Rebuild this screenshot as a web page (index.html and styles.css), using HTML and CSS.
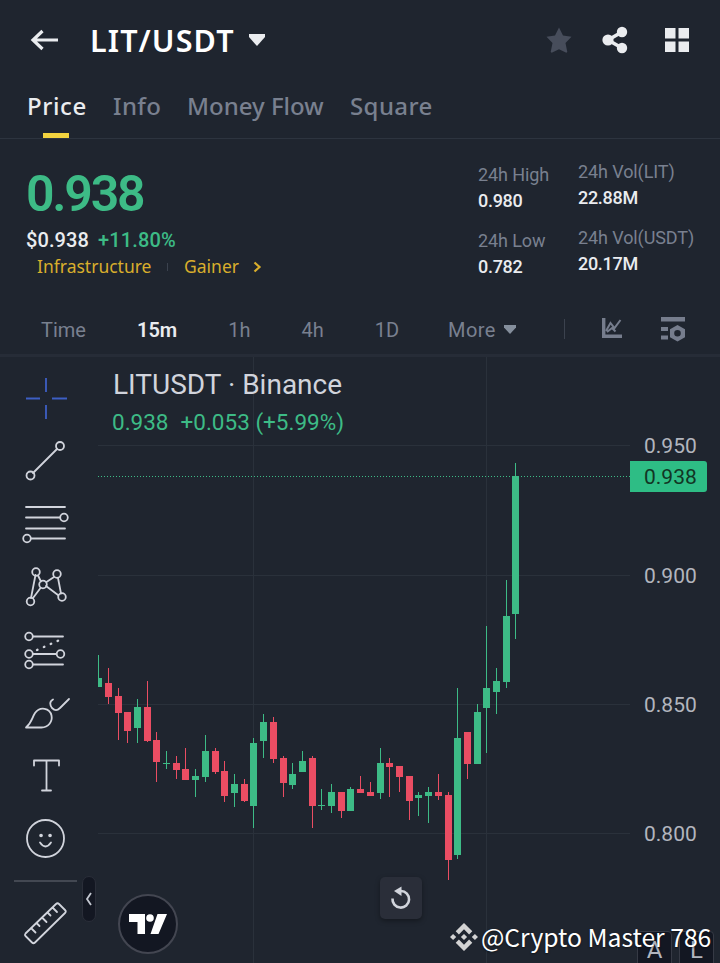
FILE: index.html
```html
<!DOCTYPE html>
<html lang="en">
<head>
    <meta charset="UTF-8">
    <meta name="viewport" content="width=device-width, initial-scale=1.0">
    <title>LIT/USDT</title>
    <link rel="stylesheet" href="styles.css">
</head>
<body>

    <div class="screen">
        <!-- Header -->
        <header class="header">
            <svg class="back" width="28" height="22" viewBox="0 0 28 22"><path d="M12.500 2 3 11l9.500 9M3.500 11H28" fill="none" stroke="#eaecef" stroke-width="3.200"/></svg>
            <h1 class="pair">LIT/USDT</h1>
            <svg class="caret" width="18" height="14" viewBox="0 0 18 14"><path d="M1 1h16v3L9 13 1 4z" fill="#eaecef"/></svg>
            <div class="header-icons">
                <svg width="28" height="28" viewBox="0 0 28 28"><path d="M14 1.500 18 9.500l8.500 1.200-6 6.200 1.800 9.100-1 .700L14 23.200l-7.300 3.500-1-.700 1.800-9.100-6-6.200L10 9.500z" fill="#474d5b"/></svg>
                <svg width="28" height="28" viewBox="0 0 28 28"><path d="M21 6 7 14l14 8" fill="none" stroke="#eaecef" stroke-width="3.600"/><circle cx="21" cy="6" r="5.200" fill="#eaecef"/><circle cx="7" cy="14" r="5.600" fill="#eaecef"/><circle cx="21" cy="22" r="5.200" fill="#eaecef"/></svg>
                <svg class="grid-icon" width="26" height="26" viewBox="0 0 26 26"><path d="M1 1h10.500v10.500H1zM14.500 1H25v10.500H14.500zM1 14.500h10.500V25H1zM14.500 14.500H25V25H14.500z" fill="#eaecef"/></svg>
            </div>
        </header>

        <!-- Tabs -->
        <nav class="tabs">
            <a class="tab tab-price active">Price</a>
            <a class="tab tab-info">Info</a>
            <a class="tab tab-flow">Money Flow</a>
            <a class="tab tab-square">Square</a>
        </nav>

        <!-- Ticker -->
        <section class="ticker">
            <div class="ticker-main">
                <div class="last-price">0.938</div>
                <div class="fiat"><span class="fiat-price">$0.938</span><span class="change">+11.80%</span></div>
                <div class="tags">
                    <span class="tag-infra">Infrastructure</span>
                    <span class="tag-divider"></span>
                    <span class="tag-gainer">Gainer</span>
                    <svg width="9" height="12" viewBox="0 0 9 12"><path d="M1.500 1.500 6.500 6l-5 4.500" fill="none" stroke="#d9ae2c" stroke-width="2.200"/></svg>
                </div>
            </div>
            <div class="stats stats-range">
                <div class="stat"><span class="label">24h High</span><span class="value">0.980</span></div>
                <div class="stat"><span class="label">24h Low</span><span class="value">0.782</span></div>
            </div>
            <div class="stats">
                <div class="stat"><span class="label">24h Vol(LIT)</span><span class="value">22.88M</span></div>
                <div class="stat"><span class="label">24h Vol(USDT)</span><span class="value">20.17M</span></div>
            </div>
        </section>

        <!-- Intervals -->
        <nav class="intervals">
            <a class="interval">Time</a>
            <a class="interval selected">15m</a>
            <a class="interval">1h</a>
            <a class="interval">4h</a>
            <a class="interval">1D</a>
            <a class="interval more">More <svg width="12" height="9" viewBox="0 0 12 9"><path d="M0 0h12v2.500L6 9 0 2.500z" fill="#848e9c"/></svg></a>
            <span class="interval-divider"></span>
            <svg class="indicator" width="20" height="20" viewBox="0 0 20 20" fill="none" stroke="#767d8d"><path d="M1.700 0v18.200H20" stroke-width="3.400"/><path d="m4 13 4.500-8 4 5 6-8M5 14l5-4 3.500 3.500" stroke-width="2"/></svg>
            <svg class="settings" width="26" height="26" viewBox="0 0 26 26"><path d="M1 1h24v4.500H1zM1 11h7v4H1zM1 19.500h7v4H1z" fill="#767d8d"/><path fill-rule="evenodd" d="m17.500 9 7.500 4.200v8L17.500 25.500 10 21.200v-8zM17.500 14a3.300 3.300 0 1 0 0 6.600 3.300 3.300 0 0 0 0-6.600z" fill="#767d8d"/></svg>
        </nav>

        <!-- Chart -->
        <main class="chart-panel">
            <aside class="tools">
                <svg class="tool cross" viewBox="0 0 60 63"><path d="M31 11v14M31 38v14M11 31.500h14M37 31.500h15"/></svg>
                <svg class="tool" viewBox="0 0 60 63"><path d="m18 43 24-24"/><circle cx="15.500" cy="45.500" r="4"/><circle cx="45" cy="16" r="4"/></svg>
                <svg class="tool" viewBox="0 0 60 63"><path d="M11 14h39M11 24.500h34M11 35.500h39M16 45.500h34"/><circle cx="49" cy="24.500" r="3.800"/><circle cx="12" cy="45.500" r="3.800"/></svg>
                <svg class="tool" viewBox="0 0 60 63"><path d="m16 42 4.500-23M23 19.500l3 6M18 42l7.500-10M31.500 26l7.500-5M43 22l3 15.500M31 30l12 9"/><circle cx="21" cy="16" r="3.800"/><circle cx="42" cy="18" r="3.800"/><circle cx="28" cy="28.500" r="3.800"/><circle cx="15.500" cy="45.500" r="3.800"/><circle cx="47" cy="41" r="3.800"/></svg>
                <svg class="tool" viewBox="0 0 60 63"><path d="M18 17.500h30M18 35h23M18 45.500h30"/><path d="m22 31 25-11" stroke-width="2.400" stroke-dasharray=".5 7"/><circle cx="14" cy="17.500" r="3.800"/><circle cx="14" cy="35" r="3.800"/><circle cx="45.500" cy="35" r="3.800"/><circle cx="14" cy="45.500" r="3.800"/></svg>
                <svg class="tool" viewBox="0 0 60 63"><path d="M11 45.500c6-5 6-10 9-14.500 5-7 15-5 16.500 2.500 1.200 6-3 12-10 12zM38 17.500c-4 2-3 6-1 8.500 3 3 5 3 8 0l9-9"/></svg>
                <svg class="tool" viewBox="0 0 60 63"><path d="M19 20.500v-5h25v5M31.500 15.500v30M27 45.500h9"/></svg>
                <svg class="tool" viewBox="0 0 60 63"><circle cx="30.500" cy="30.500" r="18.500"/><path d="M25 34.500q5.500 8 11 0"/><path d="M26 27.500h.1M35 27.500h.1" stroke-width="3.600"/></svg>
                <div class="tools-line"></div>
                <svg class="tool ruler" viewBox="0 0 60 63"><path d="M10.500 42.500 41 13q1.500-1.500 3 0l6 6q1.500 1.500 0 3L20 51.500q-1.500 1.500-3 0l-6.500-6.500q-1.200-1.200 0-2.500zM16 37l4.500 4.500M21.500 32l3 3M27 26.500l4.500 4.500M32.500 21.500l3 3M37.500 16.500 42 21"/></svg>
            </aside>
            <div class="chart">
                <svg id="candles" width="622" height="606" viewBox="98 357 622 606"></svg>
                <div class="legend">
                    <div class="symbol">LITUSDT · Binance</div>
                    <div class="quote"><span>0.938</span><span>+0.053 (+5.99%)</span></div>
                </div>
            </div>

            <div class="collapse"><svg width="8" height="14" viewBox="0 0 8 14"><path d="M6 1 2 7l4 6" fill="none" stroke="#c3c7d0" stroke-width="1.800"/></svg></div>
            <div class="tv-logo"><svg width="38" height="20" viewBox="0 0 38 20" fill="#fff"><path d="M0 0h16v20H8.500V8H0zM28.500 0H38l-8.500 20h-8z"/><circle cx="21" cy="4" r="3.800"/></svg></div>
            <div class="reset"><svg width="22" height="24" viewBox="0 0 22 24"><path d="M2.500 12.500A8.300 8.300 0 1 0 11 5H8" fill="none" stroke="#d1d4dc" stroke-width="2.600"/><path d="m4 5 7.500-4.500V10z" fill="#d1d4dc"/></svg></div>
            <div class="scale-buttons"><span>A</span><span>L</span></div>
            <div class="watermark">
                <svg width="28" height="28" viewBox="0 0 28 28" fill="#d3d3d3"><path d="m14 0 8.300 8.300-3.200 3.200L14 6.300 8.900 11.500 5.700 8.300zM14 28l8.300-8.300-3.200-3.200-5.100 5.200-5.100-5.200-3.200 3.200zM14 10.900l3.100 3.100-3.100 3.100-3.100-3.100zM3.100 10.900 6.200 14l-3.100 3.100L0 14zM24.900 10.900 28 14l-3.100 3.100-3.100-3.100z"/></svg>
                <span>@Crypto Master 786</span>
            </div>
        </main>
    </div>

    <script src="chart.js"></script>
</body>
</html>
```
FILE: styles.css
```css
/* General Styles */
* {
    margin: 0;
    padding: 0;
    box-sizing: border-box;
}

body {
    font-family: Roboto, sans-serif;
    background: #1f252f;
    color: #eaecef;
}

svg {
    display: block;
    flex: none;
}

.screen {
    width: 720px;
    height: 963px;
    overflow: hidden;
    white-space: nowrap;
}

/* Header */
.header {
    display: flex;
    align-items: center;
    height: 80px;
    padding: 0 30px;
}

.pair {
    width: 143px;
    margin: 0 15px 1px 32px;
    font-family: "Noto Sans", sans-serif;
    font-size: 30.5px;
    font-weight: 600;
    letter-spacing: 1.1px;
    color: #fff;
}

.header-icons {
    display: flex;
    align-items: center;
    gap: 28px;
    margin-left: auto;
}

.grid-icon {
    margin-left: 7px;
}

/* Tabs */
.tabs {
    display: flex;
    gap: 27px;
    height: 59px;
    padding: 8px 27px 0;
    border-bottom: 1px solid #2d343f;
}

.tab {
    position: relative;
    font-family: "Noto Sans", sans-serif;
    font-size: 24px;
    font-weight: 500;
    line-height: 36px;
    color: #79808f;
}

.tab-price {
    width: 59px;
    letter-spacing: 0.6px;
}

.tab-info {
    width: 47px;
    letter-spacing: 0.4px;
}

.tab-flow {
    width: 136px;
}

.tab-square {
    letter-spacing: 0.4px;
}

.tab.active {
    color: #eaecef;
}

.tab.active::after {
    content: "";
    position: absolute;
    left: 16px;
    top: 45px;
    width: 26px;
    height: 5px;
    background: #f3d33f;
}

/* Ticker */
.ticker {
    display: flex;
    height: 162px;
    padding: 20px 26px 0;
}

.ticker-main {
    flex: none;
    width: 452px;
}

.last-price {
    height: 69px;
    font-size: 50px;
    font-weight: 600;
    letter-spacing: -2.2px;
    line-height: 70px;
    color: #3dbb86;
}

.fiat {
    display: flex;
    gap: 9px;
    font-size: 20px;
    font-weight: 500;
    line-height: 24px;
}

.fiat-price {
    letter-spacing: 0.1px;
}

.change {
    letter-spacing: 0.15px;
    color: #3dbb86;
}

.tags {
    display: flex;
    align-items: center;
    padding-left: 11px;
    font-family: "Noto Sans", sans-serif;
    font-size: 17.5px;
    line-height: 29px;
    color: #d9ae2c;
}

.tag-infra {
    width: 115px;
}

.tag-gainer {
    width: 55px;
}

.tag-divider {
    width: 1px;
    height: 8px;
    margin: 0 16px 0 15px;
    background: #3b424e;
}

.tags svg {
    margin-left: 14px;
}

.stats {
    display: flex;
    flex-direction: column;
    flex: none;
    gap: 14px;
}

.stats-range {
    width: 100px;
    padding-top: 3px;
}

.stat {
    display: flex;
    flex-direction: column;
    line-height: 26px;
}

.label {
    font-size: 18px;
    letter-spacing: -0.1px;
    color: #79808f;
}

.value {
    font-size: 18px;
    font-weight: 500;
    letter-spacing: -0.3px;
}

/* Intervals */
.intervals {
    display: flex;
    align-items: center;
    height: 56px;
    padding: 4px 34px 0 41px;
    border-bottom: 3px solid #262c37;
    font-size: 20px;
    color: #79808f;
}

.interval {
    margin-right: 51px;
}

.selected {
    font-weight: 600;
    color: #eaecef;
}

.more {
    display: flex;
    align-items: center;
    gap: 8px;
    margin-left: -2px;
    margin-right: 0;
    letter-spacing: 0.4px;
}

.interval-divider {
    width: 1px;
    height: 20px;
    margin: 0 37px 2px auto;
    background: #3b424e;
}

.indicator {
    margin-bottom: 3px;
}

.settings {
    margin: 0 0 1px 38px;
}

/* Chart */
.chart-panel {
    position: relative;
    display: flex;
    height: 606px;
}

.tools {
    width: 98px;
    padding: 10px 0 0 15px;
}

.tool {
    width: 60px;
    height: 63px;
    fill: none;
    stroke: #d1d4dc;
    stroke-width: 1.8;
    stroke-linecap: round;
    stroke-linejoin: round;
}

.cross {
    stroke: #3d5fc4;
    stroke-linecap: butt;
}

.tools-line {
    width: 63px;
    height: 2px;
    margin: 9px 0 9px -1px;
    background: #434852;
}

.legend {
    position: absolute;
    left: 113px;
    top: 10px;
}

.symbol {
    font-size: 28px;
    line-height: 36px;
    color: #d1d4dc;
}

.quote {
    display: flex;
    gap: 12px;
    margin-left: -1px;
    font-size: 22.5px;
    line-height: 38px;
    color: #3dbb86;
}

.grid {
    stroke: #2a313b;
}

.up {
    fill: #3dbb86;
}

.down {
    fill: #ea4d63;
}

.price-line {
    stroke: #3dbb86;
    stroke-dasharray: 1 2;
}

.axis-label {
    font-size: 21px;
    fill: #b2b5be;
}

.axis-current {
    fill: #123524;
}

.price-tag {
    fill: #2ebd85;
}

/* Floating controls */
.collapse,
.tv-logo,
.reset {
    position: absolute;
    display: flex;
    align-items: center;
    justify-content: center;
}

.collapse {
    left: 82px;
    top: 519px;
    width: 14px;
    height: 46px;
    border: 1px solid #2a2e39;
    border-radius: 7px;
    background: #131722;
}

.tv-logo {
    left: 118px;
    top: 537px;
    width: 60px;
    height: 60px;
    border: 2px solid #434651;
    border-radius: 50%;
    background: #131722;
}

.reset {
    left: 380px;
    top: 520px;
    width: 42px;
    height: 42px;
    border-radius: 5px;
    background: #2a2e39;
    box-shadow: 0 2px 5px rgba(0, 0, 0, 0.35);
}

.scale-buttons {
    position: absolute;
    left: 637px;
    top: 574px;
    display: flex;
    gap: 7px;
}

.scale-buttons span {
    width: 35px;
    height: 40px;
    border: 1px solid #363a45;
    border-radius: 4px;
    background: #131722;
    font-size: 24px;
    line-height: 37px;
    text-align: center;
    color: #b2b5be;
}

.watermark {
    position: absolute;
    left: 450px;
    top: 563px;
    display: flex;
    align-items: center;
    gap: 3px;
    font-family: "Noto Sans CJK SC", sans-serif;
    font-size: 24.7px;
    line-height: 36px;
    color: #fff;
    text-shadow: 0 1px 2px rgba(0, 0, 0, 0.5);
}

.watermark span {
    margin-top: -2px;
}
```
FILE: chart.js
```js
// [x, high, body top, body bottom, low, direction]
const candles = [
    [108, 668, 683, 697, 704, 'down'],
    [118, 688, 696, 713, 740, 'down'],
    [127, 712, 712, 731, 743, 'down'],
    [137, 699, 707, 728, 743, 'up'],
    [147, 681, 707, 741, 742, 'down'],
    [156, 732, 740, 762, 782, 'down'],
    [166, 751, 763, 764, 769, 'up'],
    [176, 756, 763, 770, 779, 'down'],
    [185, 748, 769, 780, 780, 'down'],
    [195, 769, 776, 780, 797, 'up'],
    [205, 735, 751, 777, 782, 'up'],
    [215, 748, 751, 772, 774, 'down'],
    [224, 761, 771, 796, 802, 'down'],
    [234, 774, 784, 793, 807, 'up'],
    [244, 779, 784, 801, 802, 'down'],
    [253, 738, 743, 806, 828, 'up'],
    [263, 714, 722, 741, 758, 'up'],
    [273, 717, 722, 759, 763, 'down'],
    [283, 756, 758, 783, 797, 'down'],
    [292, 763, 774, 785, 789, 'up'],
    [302, 751, 761, 772, 772, 'up'],
    [312, 756, 758, 806, 828, 'down'],
    [321, 789, 805, 806, 810, 'up'],
    [331, 784, 792, 806, 813, 'up'],
    [341, 792, 792, 811, 818, 'down'],
    [350, 787, 789, 811, 811, 'up'],
    [360, 776, 789, 793, 793, 'down'],
    [370, 782, 792, 796, 796, 'down'],
    [380, 748, 763, 793, 799, 'up'],
    [389, 758, 763, 767, 797, 'down'],
    [399, 766, 766, 777, 792, 'down'],
    [409, 776, 776, 801, 820, 'down'],
    [418, 792, 795, 798, 816, 'up'],
    [428, 787, 792, 796, 823, 'up'],
    [438, 774, 792, 796, 800, 'down'],
    [448, 792, 795, 860, 880, 'down'],
    [457, 688, 738, 855, 859, 'up'],
    [467, 732, 732, 764, 779, 'down'],
    [477, 704, 712, 764, 764, 'up'],
    [486, 626, 688, 708, 753, 'up'],
    [496, 668, 681, 692, 714, 'up'],
    [506, 580, 616, 682, 688, 'up'],
    [515, 463, 476, 614, 639, 'up']
];

const levels = [['0.950', 445], ['0.900', 575], ['0.850', 704], ['0.800', 833]];

let out = '';
levels.forEach(([label, y]) => {
    out += `<path class="grid" d="M98 ${y + 0.5}H630"/>`;
    out += `<text class="axis-label" x="644" y="${y + 8}">${label}</text>`;
});
[253, 486].forEach(x => {
    out += `<path class="grid" d="M${x + 0.5} 357V963"/>`;
});

out += '<path class="price-line" d="M98 476.5H630"/>';

// first candle is cut off by the left edge
out += '<path class="up" d="M98 655h1v23h3v9h-4z"/>';
candles.forEach(([x, high, top, bottom, low, dir]) => {
    out += `<rect class="${dir}" x="${x}" y="${high}" width="1" height="${low - high}"/>`;
    out += `<rect class="${dir}" x="${x - 3}" y="${top}" width="7" height="${bottom - top}"/>`;
});

out += '<path class="price-tag" d="M630 461h74q3 0 3 3v25q0 3-3 3h-74z"/>';
out += '<text class="axis-label axis-current" x="644" y="484">0.938</text>';

document.getElementById('candles').innerHTML = out;
```
